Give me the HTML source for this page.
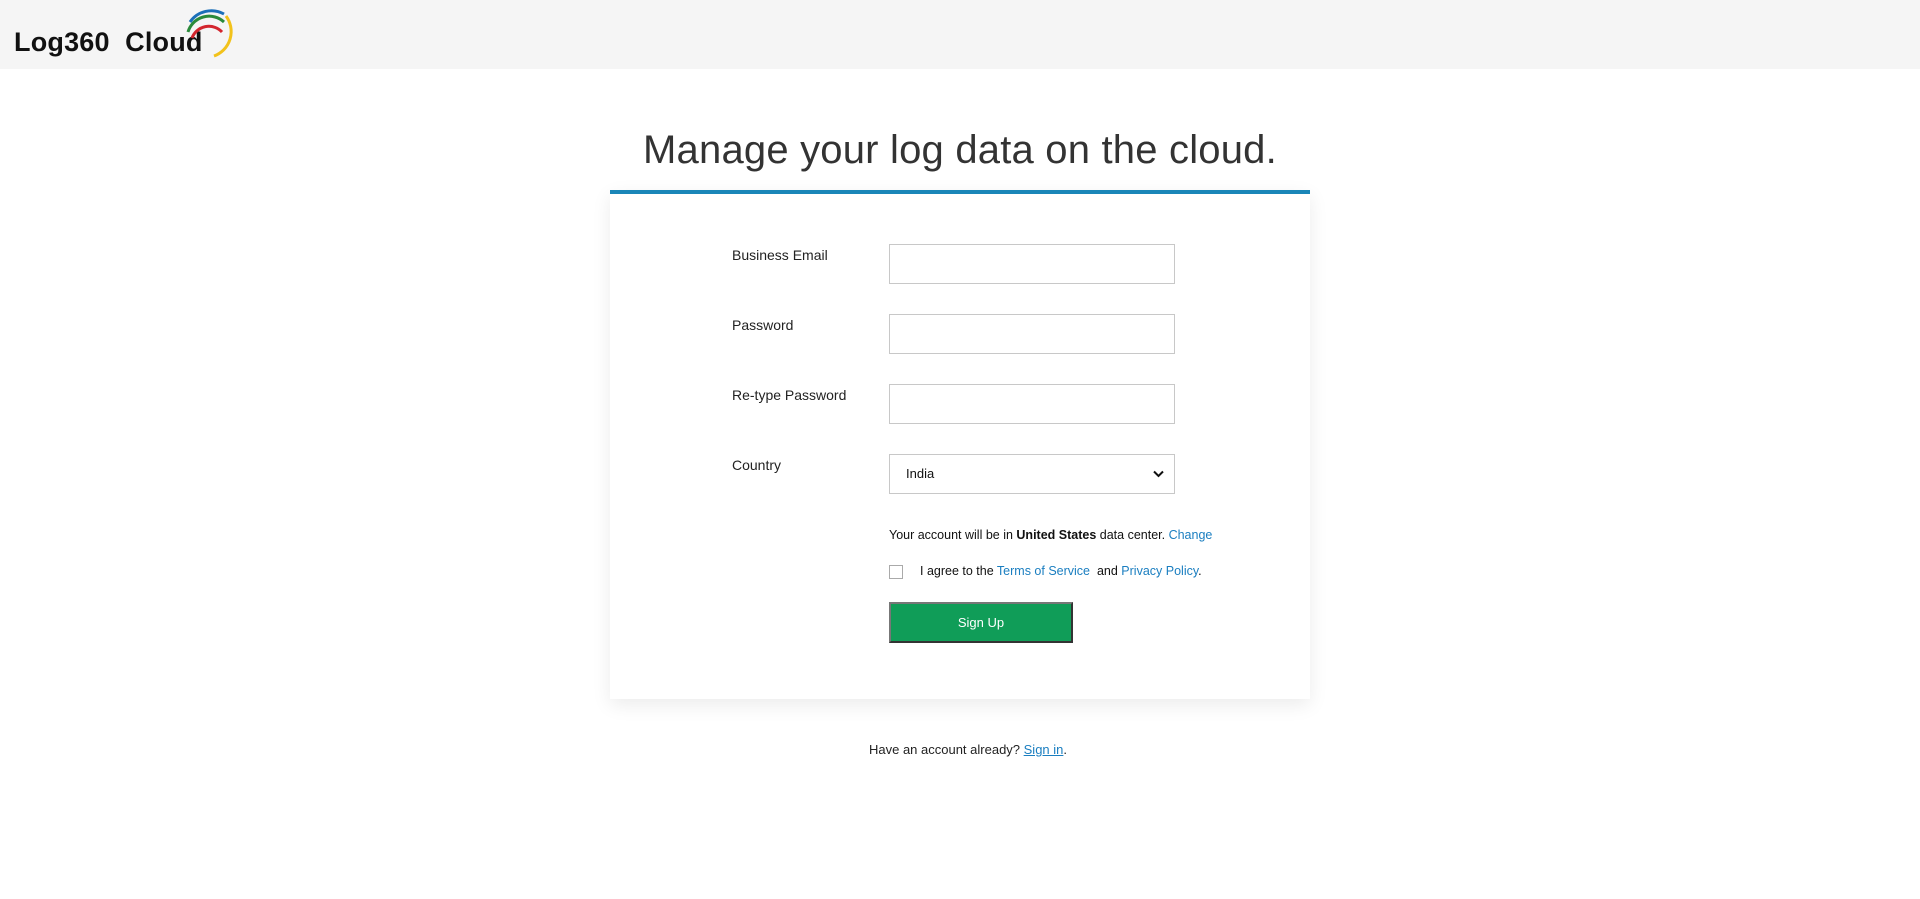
<!DOCTYPE html>
<html><head><meta charset="utf-8"><style>
*{box-sizing:border-box;margin:0;padding:0}
body{width:1920px;height:899px;background:#fff;font-family:"Liberation Sans",sans-serif;color:#111;position:relative;overflow:hidden}
.hdr{position:absolute;left:0;top:0;width:1920px;height:69px;background:#f5f5f5}
.logo{position:absolute;left:14px;top:27px;font-size:27px;font-weight:bold;letter-spacing:0.2px;color:#111}
h1{position:absolute;left:0;width:1920px;top:128px;text-align:center;font-weight:300;font-size:40px;color:#333;letter-spacing:0.2px}
.card{position:absolute;left:610px;top:190px;width:700px;height:509px;background:#fff;border-top:4px solid #1a86b8;box-shadow:0 6px 18px rgba(0,0,0,.08)}
.lbl{position:absolute;left:732px;font-size:14px;color:#222}
.inp{position:absolute;left:889px;width:286px;height:40px;border:1px solid #c8c8c8;background:#fff}
.sel{font-size:13px;padding:11px 0 0 16px}
.sm{position:absolute;font-size:12.5px;color:#111}
a{color:#1a7ec0;text-decoration:none}
.btn{position:absolute;left:889px;top:602px;width:184px;height:41px;background:#109d58;border:2px solid #333;border-top-color:#777;border-left-color:#777;color:#fff;font-size:13px;text-align:center;line-height:37px}
</style></head><body>
<div class="hdr">
<div class="logo">Log360&nbsp; Cloud</div>
<svg style="position:absolute;left:184px;top:8px" width="54" height="52" viewBox="0 0 54 52">
<path d="M6 14 A26 26 0 0 1 40 6" stroke="#1b6fb8" stroke-width="3" fill="none"/>
<path d="M4 24 A22 22 0 0 1 40 14" stroke="#2a8a3a" stroke-width="3" fill="none"/>
<path d="M8 30 A18 18 0 0 1 38 24" stroke="#d3262e" stroke-width="3" fill="none"/>
<path d="M42 8 A26 26 0 0 1 30 48" stroke="#f2c21b" stroke-width="3" fill="none"/>
</svg>
</div>
<h1>Manage your log data on the cloud.</h1>
<div class="card"></div>
<div class="lbl" style="top:247px">Business Email</div>
<div class="inp" style="top:244px"></div>
<div class="lbl" style="top:317px">Password</div>
<div class="inp" style="top:314px"></div>
<div class="lbl" style="top:387px">Re-type Password</div>
<div class="inp" style="top:384px"></div>
<div class="lbl" style="top:457px">Country</div>
<div class="inp sel" style="top:454px">India
<svg style="position:absolute;right:10px;top:15px" width="11" height="8" viewBox="0 0 11 8"><path d="M1 1.5 L5.5 6 L10 1.5" stroke="#111" stroke-width="2" fill="none"/></svg></div>
<div class="sm" style="left:889px;top:528px">Your account will be in <b>United States</b> data center. <a>Change</a></div>
<div style="position:absolute;left:889px;top:565px;width:14px;height:14px;border:1px solid #aaa;background:#fff"></div>
<div class="sm" style="left:920px;top:564px">I agree to the <a>Terms of Service</a>&nbsp; and <a>Privacy Policy</a>.</div>
<div class="btn">Sign Up</div>
<div class="sm" style="left:8px;width:1920px;text-align:center;top:742px;font-size:13px;color:#222">Have an account already? <a style="text-decoration:underline">Sign in</a>.</div>
</body></html>
